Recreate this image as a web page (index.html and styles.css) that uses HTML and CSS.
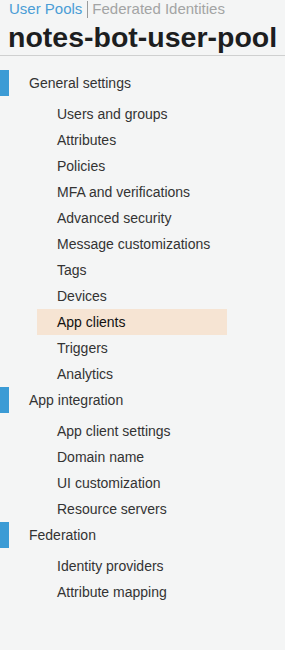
FILE: index.html
```html
<!DOCTYPE html>
<html lang="en">
  <head>
    <meta charset="UTF-8" />
    <meta name="viewport" content="width=device-width, initial-scale=1.0" />
    <title>notes-bot-user-pool</title>
    <link rel="stylesheet" href="styles.css">
  </head>
  <body>
    <div class="page-header">
      <div class="pool-tabs">
        <a class="pool-tab active" href="#">User Pools</a>
        <span class="pool-sep"></span>
        <a class="pool-tab" href="#">Federated Identities</a>
      </div>
      <h1 class="pool-title">notes-bot-user-pool</h1>
    </div>

    <nav class="side-nav">
      <div class="nav-section">
        <div class="nav-heading">General settings</div>
        <ul class="nav-items">
          <li><a href="#">Users and groups</a></li>
          <li><a href="#">Attributes</a></li>
          <li><a href="#">Policies</a></li>
          <li><a href="#">MFA and verifications</a></li>
          <li><a href="#">Advanced security</a></li>
          <li><a href="#">Message customizations</a></li>
          <li><a href="#">Tags</a></li>
          <li><a href="#">Devices</a></li>
          <li class="selected"><a href="#">App clients</a></li>
          <li><a href="#">Triggers</a></li>
          <li><a href="#">Analytics</a></li>
        </ul>
      </div>

      <div class="nav-section">
        <div class="nav-heading">App integration</div>
        <ul class="nav-items">
          <li><a href="#">App client settings</a></li>
          <li><a href="#">Domain name</a></li>
          <li><a href="#">UI customization</a></li>
          <li><a href="#">Resource servers</a></li>
        </ul>
      </div>

      <div class="nav-section">
        <div class="nav-heading">Federation</div>
        <ul class="nav-items">
          <li><a href="#">Identity providers</a></li>
          <li><a href="#">Attribute mapping</a></li>
        </ul>
      </div>
    </nav>
  </body>
</html>
```

FILE: styles.css
```css
body {
  font-family: "Liberation Sans", Arial, sans-serif;
  margin: 0;
  background-color: #f4f5f5;
  color: #333;
}

a {
  text-decoration: none;
  color: inherit;
}

.page-header {
  padding: 0 0 2px 9px;
  border-bottom: 1px solid #cfd0d0;
}

.pool-tabs {
  display: flex;
  align-items: center;
  height: 18px;
  font-size: 15px;
  line-height: 18px;
}

.pool-tab {
  color: #a3a4a4;
}

.pool-tab.active {
  color: #4a9dd6;
}

.pool-sep {
  display: inline-block;
  width: 1px;
  height: 17px;
  margin: 1px 4px 0 5px;
  background-color: #9a9b9b;
}

.pool-title {
  margin: 3px 0 0 -1px;
  font-size: 28.5px;
  line-height: 32px;
  font-weight: bold;
  color: #1d1e1f;
  white-space: nowrap;
}

.side-nav {
  padding-top: 14px;
  font-size: 14px;
}

.nav-heading {
  height: 26px;
  line-height: 26px;
  padding-left: 20px;
  border-left: 9px solid #3b9bd5;
  margin-bottom: 5px;
}

.nav-items {
  list-style: none;
  margin: 0 0 0 37px;
  padding: 0;
  width: 190px;
}

.nav-items li a {
  display: block;
  height: 26px;
  line-height: 26px;
  padding-left: 20px;
}

.nav-items li.selected a {
  background-color: #f6e4d3;
  color: #111;
}
```
